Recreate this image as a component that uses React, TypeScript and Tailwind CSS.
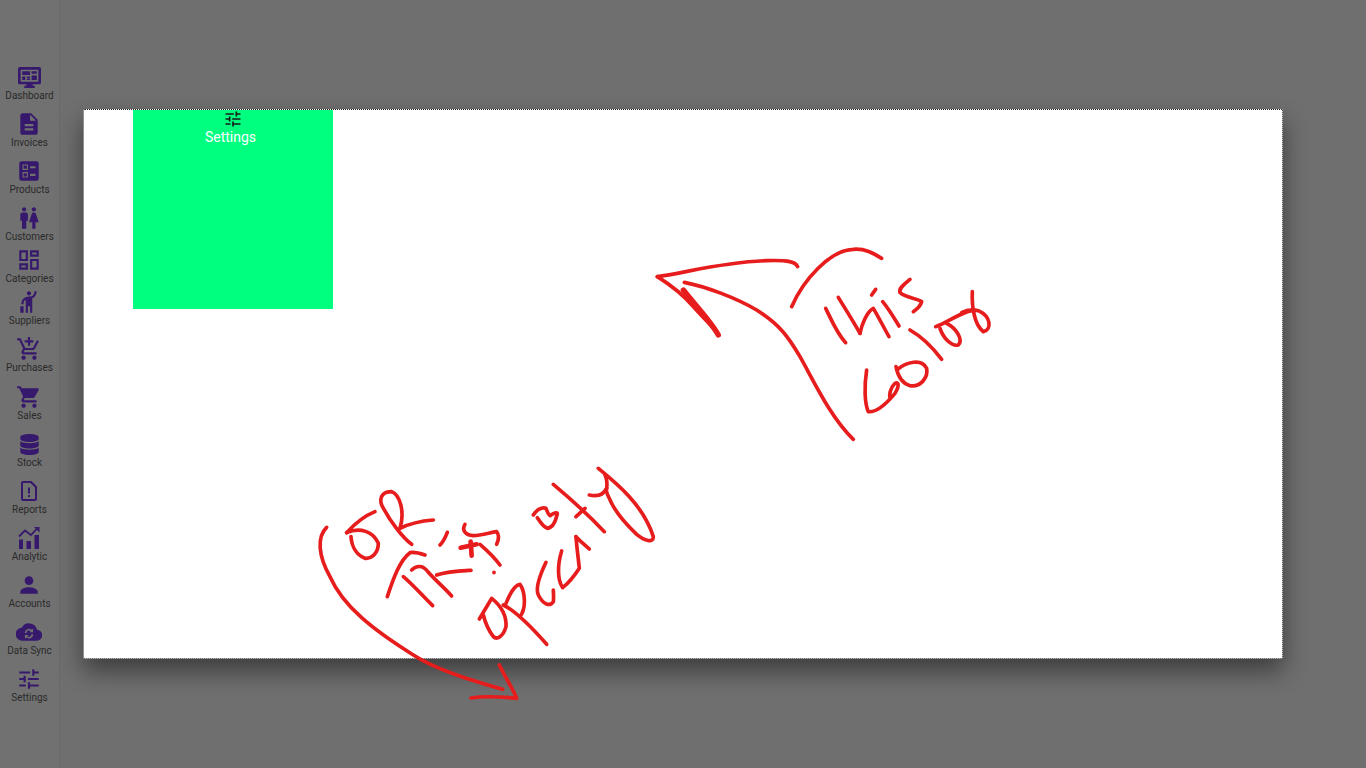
import { MdAddShoppingCart, MdBallot, MdDescription, MdOutlineDashboard, MdPerson, MdShoppingCart, MdTune, MdWc, MdHail } from "react-icons/md";
import { FaDatabase } from "react-icons/fa";
import React from "react";

function DashboardIcon() {
  return (
    <svg viewBox="0 0 24 24" width="25" height="25" fill="currentColor">
      <path fillRule="evenodd" d="M2.500 2h19A1.500 1.500 0 0 1 23 3.500V17a1.500 1.500 0 0 1-1.500 1.500H15v1.500h2v2H7v-2h2v-1.500H2.500A1.500 1.500 0 0 1 1 17V3.500A1.500 1.500 0 0 1 2.500 2zM3.500 4.500V16h17V4.500z" />
      <path d="M5 6h7.500v3.500H5zM5 11h3v3.500H5zM9.500 11h3v1.500h-3zM9.500 13h3v1.500h-3zM14 6h5v2.500h-5zM14 10h5v4.500h-5z" />
    </svg>
  );
}

function ReportIcon() {
  return (
    <svg viewBox="0 0 24 24" width="24" height="24" fill="currentColor">
      <path fillRule="evenodd" d="M6 2h8.500L20 7.500V20a2 2 0 0 1-2 2H6a2 2 0 0 1-2-2V4a2 2 0 0 1 2-2zm0 2v16h12V8.500L13.500 4z" />
      <path d="M11 8.500h2v6h-2zM11 16h2v2h-2z" />
    </svg>
  );
}

function AnalyticIcon() {
  return (
    <svg viewBox="0 0 24 24" width="24" height="24" fill="currentColor">
      <path d="M2 13.500h4V23H2zM9.500 15h4.500v8H9.500zM17.500 9h4.500v14h-4.500z" />
      <path d="M2 10.500l6-6 6 4.500 6.500-7" fill="none" stroke="currentColor" strokeWidth="1.800" />
      <path d="M17 1h5.500v5.500z" />
    </svg>
  );
}

function DataSyncIcon() {
  return (
    <svg viewBox="0 0 24 24" width="26" height="26">
      <path fill="currentColor" d="M19.400 10A7.500 7.500 0 0 0 5.400 8 6 6 0 0 0 6 20h13a5 5 0 0 0 .400-10z" />
      <path fill="none" stroke="#6f6f6f" strokeWidth="1.500" d="M8.800 13a3.400 3.400 0 0 1 5.800-2.200M15.200 14a3.400 3.400 0 0 1-5.800 2.200" />
      <path fill="#6f6f6f" d="M15.800 8.800v3.400h-3.400zM8.200 18.200v-3.400h3.400z" />
    </svg>
  );
}

const navItems = [
  { label: "Dashboard", icon: <DashboardIcon />, height: "h-[47px]" },
  { label: "Invoices", icon: <MdDescription size={26} />, height: "h-[47px]" },
  { label: "Products", icon: <MdBallot size={26} />, height: "h-[47px]" },
  { label: "Customers", icon: <MdWc size={26} />, height: "h-[42px]" },
  { label: "Categories", icon: <MdOutlineDashboard size={26} />, height: "h-[42px]" },
  { label: "Suppliers", icon: <MdHail size={26} />, height: "h-[47px]" },
  { label: "Purchases", icon: <MdAddShoppingCart size={26} />, height: "h-[48px]" },
  { label: "Sales", icon: <MdShoppingCart size={26} />, height: "h-[47px]" },
  { label: "Stock", icon: <FaDatabase size={21} />, height: "h-[47px]" },
  { label: "Reports", icon: <ReportIcon />, height: "h-[47px]" },
  { label: "Analytic", icon: <AnalyticIcon />, height: "h-[47px]" },
  { label: "Accounts", icon: <MdPerson size={26} />, height: "h-[47px]" },
  { label: "Data Sync", icon: <DataSyncIcon />, height: "h-[47px]" },
  { label: "Settings", icon: <MdTune size={26} />, height: "h-[47px]" },
];

function Scribbles() {
  return (
    <svg
      className="absolute inset-0 pointer-events-none"
      width="1366"
      height="768"
      viewBox="0 0 1366 768"
      fill="none"
      stroke="#e71c1c"
      strokeLinecap="round"
      strokeLinejoin="round"
      strokeWidth="11"
    >
      {/* big arrow + arc */}
      <g transform="translate(640 230) scale(.3333)">
        <path d="M52 140C130 130 250 95 380 92C430 90 465 92 473 110" />
        <path d="M52 140C100 170 130 195 160 230C190 265 215 285 235 315" />
        <path d="M130 180C165 225 210 270 235 315" strokeWidth="16" />
        <path d="M133 157C200 170 290 205 350 240C420 285 445 320 480 380C520 450 570 560 640 628" />
        <path d="M455 230C490 150 570 60 640 58C675 55 700 70 725 85" />
      </g>
      {/* this color */}
      <g transform="translate(815 270) scale(.3333)">
        <path d="M32 115C45 140 65 190 92 218" />
        <path d="M70 82C90 115 115 155 135 190" />
        <path d="M135 190C140 165 155 125 175 115C190 140 205 170 222 200" />
        <path d="M182 58L170 75" />
        <path d="M203 95C220 115 235 140 252 168" />
        <path d="M285 28C268 42 250 55 255 68C275 85 310 85 320 95C318 105 305 118 295 125" />
        <path d="M155 300C148 345 148 400 160 425C185 428 215 400 240 370C255 345 250 335 240 340C225 355 222 375 225 385" />
        <path d="M245 300C275 275 320 265 335 295C340 325 315 352 285 347C260 340 248 315 243 290" />
        <path d="M285 180C320 200 355 235 380 268" />
        <path d="M362 170C395 160 430 130 470 122" />
        <path d="M375 175C385 205 410 230 430 225C445 210 425 175 395 160" />
        <path d="M472 65C470 110 478 165 505 185C530 180 530 140 490 122C475 118 455 120 440 128" />
      </g>
      {/* lower arrow */}
      <g transform="translate(310 460) scale(.3333)">
        <path d="M50 202C20 230 25 290 60 350C100 440 190 510 310 585C380 630 480 660 578 688" />
        <path d="M568 615C585 650 605 680 620 715C570 710 520 708 483 714" />
      </g>
      {/* or, this */}
      <g transform="translate(340 485) scale(.3333)">
        <path d="M20 143C50 110 80 90 105 80" />
        <path d="M20 143C60 125 100 140 115 175C115 205 95 222 75 220C50 210 35 185 33 155" />
        <path d="M215 178C190 160 150 110 125 60C115 30 135 20 155 20C180 30 195 80 180 130C210 115 240 108 280 105" />
        <path d="M322 142C315 160 310 170 300 180" />
        <path d="M142 335C160 280 180 225 210 203C225 200 240 205 255 210" />
        <path d="M190 275C220 300 250 335 278 362" />
        <path d="M215 255C230 240 250 240 265 262C285 285 310 305 335 333" />
        <path d="M290 270C320 260 360 258 393 256" />
        <path d="M375 118C365 135 375 150 400 152C425 150 450 143 470 140C478 150 476 165 470 178" />
        <path d="M362 188L410 178" strokeWidth="14" />
        <path d="M392 170L395 212" strokeWidth="14" />
        <path d="M420 178C440 195 465 220 480 240" />
        <path d="M462 262L462 263" />
      </g>
      {/* opacity */}
      <g transform="translate(470 465) scale(.3333)">
        <path d="M28 462L65 400C90 420 110 450 108 485C100 515 80 525 70 515C55 495 45 470 40 450" />
        <path d="M108 415C120 385 135 360 150 358C165 380 170 430 150 455" />
        <path d="M100 420C130 435 170 470 230 538" />
        <path d="M228 292C210 330 195 370 205 390C220 420 240 425 250 410C252 395 250 385 250 375" />
        <path d="M275 258C262 300 262 345 278 368C295 355 315 330 328 310C325 280 320 245 318 215" />
        <path d="M318 215C330 228 345 240 358 252" />
        <path d="M250 58C300 100 360 155 403 200" />
        <path d="M318 155L345 130" />
        <path d="M190 150C200 135 215 125 228 130C232 140 235 150 240 152C250 145 258 140 262 145C258 165 248 188 232 190C218 185 210 170 202 158" />
        <path d="M358 90C380 95 400 90 410 70C412 55 410 40 405 30" />
        <path d="M385 10C440 55 520 120 550 215C550 235 525 228 500 208C460 170 430 130 418 100C410 85 408 75 410 70" />
      </g>
    </svg>
  );
}

function App() {
  return (
    <div className="relative h-screen w-full overflow-hidden bg-[#6f6f6f] font-['Roboto',sans-serif]">
      <div className="flex h-full w-[60px] flex-col border-r border-[#696969] bg-[#717171] pt-[65px]">
        {navItems.map((item) => (
          <div key={item.label} className={`flex shrink-0 flex-col items-center ${item.height}`}>
            <div className="mr-px flex h-[24px] items-center justify-center text-[#36186c]">{item.icon}</div>
            <span className="mt-px text-[10px] leading-[12px] text-[#2a2a2a]">{item.label}</span>
          </div>
        ))}
      </div>

      <div className="absolute left-[83px] top-[109px] h-[550px] w-[1200px] rounded-[2px] border border-dotted border-[#222222] bg-white pl-[49px] shadow-[0_12px_24px_rgba(0,0,0,0.45)]">
        <div className="flex h-[199px] w-[200px] flex-col items-center bg-[#00ff7f]">
          <MdTune size={20} className="-mt-px text-[#1a1a1a]" />
          <span className="mr-[5px] text-[14px] leading-[16px] text-white">Settings</span>
        </div>
      </div>

      <Scribbles />
    </div>
  );
}

export default App;
